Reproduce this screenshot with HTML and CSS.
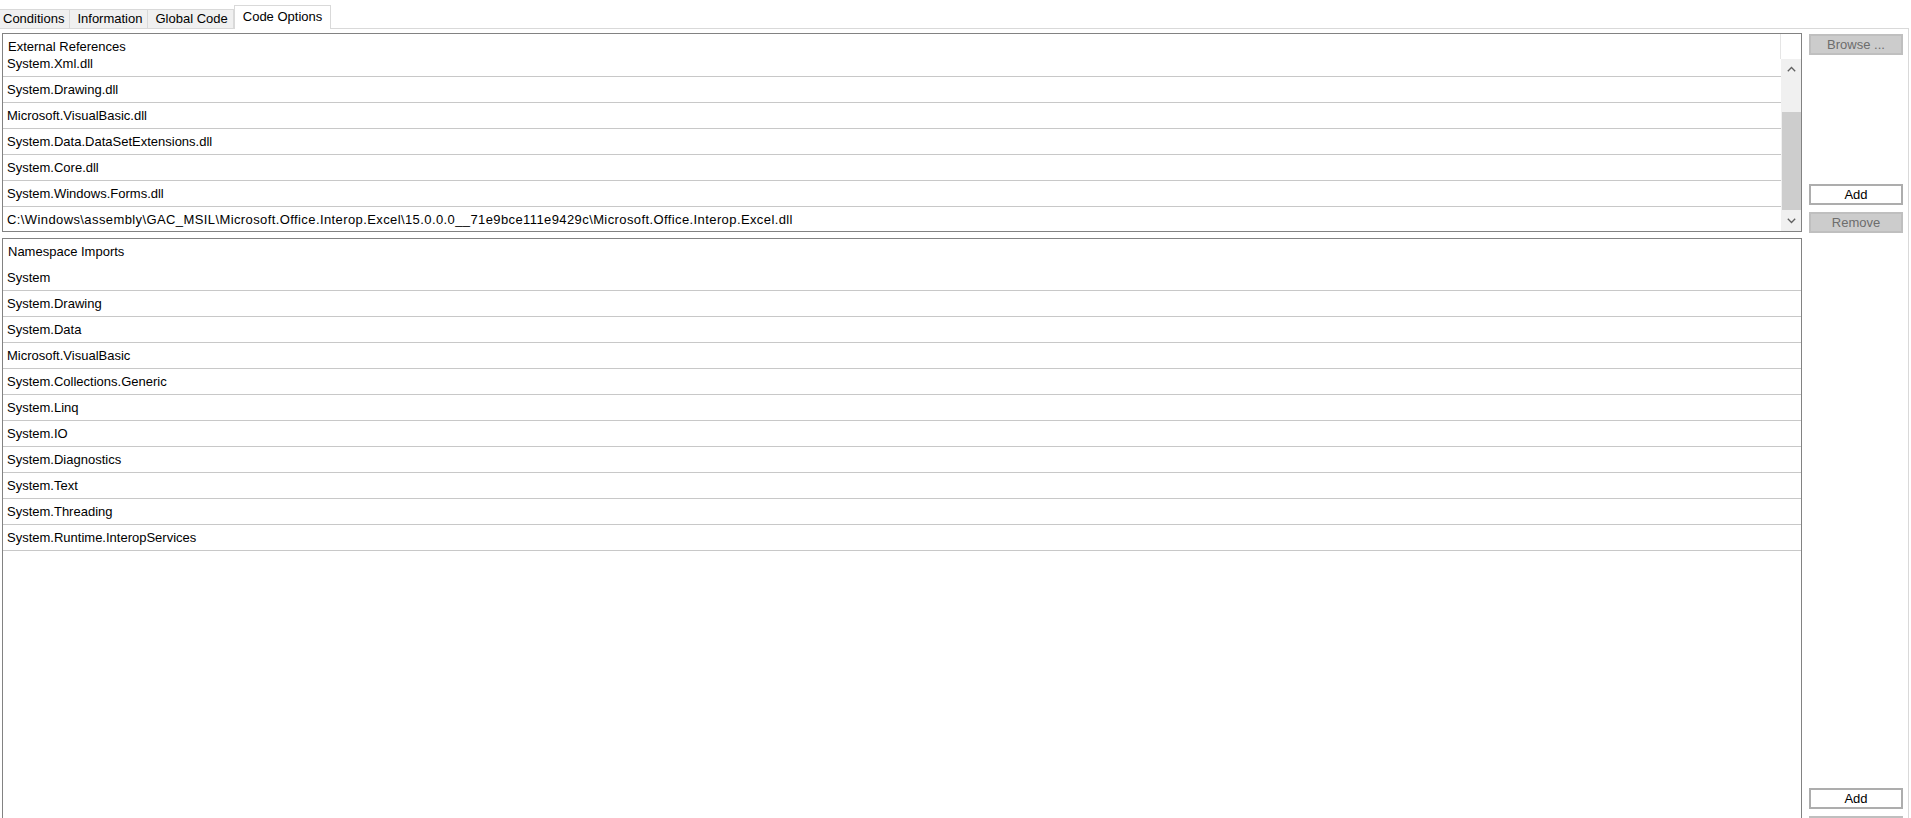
FILE: index.html
```html
<!DOCTYPE html>
<html lang="en">
<head>
  <meta charset="UTF-8">
  <title>Code Options</title>
  <link rel="stylesheet" href="styles.css">
</head>
<body>
  <div class="tabs">
    <div class="tab first">Conditions</div>
    <div class="tab">Information</div>
    <div class="tab">Global Code</div>
    <div class="tab active">Code Options</div>
  </div>
  <div class="panel">
    <div class="listbox refs">
      <div class="list-head">External References</div>
      <div class="list-body">
        <div class="rows scrolled">
          <div class="row">System.Xml.dll</div>
          <div class="row">System.Drawing.dll</div>
          <div class="row">Microsoft.VisualBasic.dll</div>
          <div class="row">System.Data.DataSetExtensions.dll</div>
          <div class="row">System.Core.dll</div>
          <div class="row">System.Windows.Forms.dll</div>
          <div class="row path">C:\Windows\assembly\GAC_MSIL\Microsoft.Office.Interop.Excel\15.0.0.0__71e9bce111e9429c\Microsoft.Office.Interop.Excel.dll</div>
        </div>
        <div class="scrollbar">
          <div class="arrow">
            <svg width="9" height="6" viewBox="0 0 9 6"><path d="M0.8 5.2 L4.5 1.5 L8.2 5.2" fill="none" stroke="#606060" stroke-width="1.3"/></svg>
          </div>
          <div class="track"><div class="thumb"></div></div>
          <div class="arrow">
            <svg width="9" height="6" viewBox="0 0 9 6"><path d="M0.8 0.8 L4.5 4.5 L8.2 0.8" fill="none" stroke="#606060" stroke-width="1.3"/></svg>
          </div>
        </div>
      </div>
    </div>
    <div class="actions top">
      <button class="btn" disabled>Browse ...</button>
      <button class="btn push">Add</button>
      <button class="btn last" disabled>Remove</button>
    </div>
    <div class="listbox imports">
      <div class="list-head tall">Namespace Imports</div>
      <div class="rows">
        <div class="row">System</div>
        <div class="row">System.Drawing</div>
        <div class="row">System.Data</div>
        <div class="row">Microsoft.VisualBasic</div>
        <div class="row">System.Collections.Generic</div>
        <div class="row">System.Linq</div>
        <div class="row">System.IO</div>
        <div class="row">System.Diagnostics</div>
        <div class="row">System.Text</div>
        <div class="row">System.Threading</div>
        <div class="row">System.Runtime.InteropServices</div>
      </div>
    </div>
    <div class="actions bottom">
      <button class="btn">Add</button>
      <button class="btn" disabled>Remove</button>
    </div>
  </div>
</body>
</html>
```

FILE: styles.css
```css
html, body {
  overflow: hidden;
}
body {
  margin: 0;
  background: #fff;
  color: #000;
  font-family: "Liberation Sans", Arial, sans-serif;
  font-size: 13px;
}
.tabs {
  display: flex;
  align-items: flex-end;
  width: 1909px;
  height: 28px;
  border-bottom: 1px solid #d9d9d9;
}
.tab {
  box-sizing: border-box;
  height: 19px;
  line-height: 18px;
  padding: 0 5px 0 7px;
  background: #f0f0f0;
  border: 1px solid #d9d9d9;
  border-left: 0;
  border-bottom: 0;
  white-space: nowrap;
}
.tab.first {
  padding-left: 3px;
}
.tab.active {
  height: 24px;
  line-height: 22px;
  margin-bottom: -1px;
  padding: 0 8px;
  background: #fff;
  border-left: 1px solid #d9d9d9;
}
.panel {
  display: grid;
  grid-template-columns: 1800px 94px;
  grid-template-rows: 199px 599px;
  column-gap: 7px;
  row-gap: 6px;
  width: 1909px;
  box-sizing: border-box;
  padding: 4px 5px 0 2px;
  border-right: 1px solid #d9d9d9;
}
.listbox {
  box-sizing: border-box;
  border: 1px solid #828282;
  display: flex;
  flex-direction: column;
  overflow: hidden;
}
.list-head {
  flex: none;
  height: 25px;
  line-height: 25px;
  padding-left: 5px;
  margin-right: 20px;
  border-right: 1px solid #e5e5e5;
}
.list-head.tall {
  height: 26px;
  line-height: 26px;
  margin-right: 0;
  border-right: 0;
}
.list-body {
  flex: 1;
  display: flex;
  min-height: 0;
}
.list-body .rows {
  flex: 1;
  overflow: hidden;
}
.scrolled .row:first-child {
  margin-top: -8px;
}
.row {
  box-sizing: border-box;
  height: 26px;
  line-height: 25px;
  padding-left: 4px;
  border-bottom: 1px solid #c8c8c8;
  white-space: nowrap;
}
.row.path {
  letter-spacing: 0.4px;
}
.scrollbar {
  flex: none;
  width: 20px;
  display: flex;
  flex-direction: column;
  background: #f0f0f0;
}
.arrow {
  height: 20px;
  display: flex;
  align-items: center;
  justify-content: center;
}
.track {
  flex: 1;
  display: flex;
  flex-direction: column;
  justify-content: flex-end;
  padding: 0 0 1px 1px;
}
.thumb {
  height: 98px;
  background: #cdcdcd;
}
.actions {
  display: flex;
  flex-direction: column;
  gap: 7px;
}
.actions.top {
  padding-top: 1px;
}
.actions.bottom {
  justify-content: flex-end;
}
.push {
  margin-top: auto;
}
.last {
  margin-bottom: -1px;
}
.btn {
  box-sizing: border-box;
  height: 21px;
  width: 94px;
  padding: 0;
  font-family: inherit;
  font-size: 13px;
  color: #000;
  background: #fff;
  border: 2px solid #adadad;
  border-radius: 0;
}
.btn:disabled {
  color: #6d6d6d;
  background: #cccccc;
  border-color: #bfbfbf;
}
```
